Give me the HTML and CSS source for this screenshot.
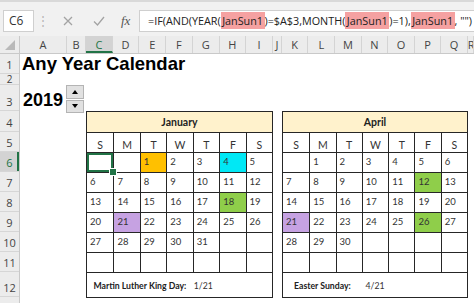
FILE: index.html
```html
<!DOCTYPE html>
<html>
<head>
<meta charset="utf-8">
<title>Any Year Calendar</title>
<link rel="stylesheet" href="styles.css">
</head>
<body>
<div class="app">
  <div class="fbar">
    <div class="namebox">C6</div>
    <div class="grip">⋮</div>
    <div class="fbtns">
      <svg class="ico-x" width="10" height="10" viewBox="0 0 10 10"><path d="M1 1L9 9M9 1L1 9" stroke="#a3a3a3" stroke-width="1.3" fill="none"/></svg>
      <svg class="ico-ok" width="12" height="10" viewBox="0 0 12 10"><path d="M1 5.5L4.5 9L11 1" stroke="#a3a3a3" stroke-width="1.3" fill="none"/></svg>
      <span class="fx">fx</span>
    </div>
    <div class="formula">=IF(AND(YEAR(<span class="ref">JanSun1</span>)=$A$3,MONTH(<span class="ref">JanSun1</span>)=1),<span class="ref">JanSun1</span>, "")</div>
  </div>

  <div class="colheads">
    <div class="corner"><svg width="10" height="10" viewBox="0 0 10 10"><path d="M10 0L10 10L0 10Z" fill="#b9b9b9"/></svg></div>
    <div class="ch">A</div>
    <div class="ch">B</div>
    <div class="ch active">C</div>
    <div class="ch">D</div>
    <div class="ch">E</div>
    <div class="ch">F</div>
    <div class="ch">G</div>
    <div class="ch">H</div>
    <div class="ch">I</div>
    <div class="ch">J</div>
    <div class="ch">K</div>
    <div class="ch">L</div>
    <div class="ch">M</div>
    <div class="ch">N</div>
    <div class="ch">O</div>
    <div class="ch">P</div>
    <div class="ch">Q</div>
    <div class="ch">R</div>
  </div>

  <div class="sheet">
    <div class="rowheads">
      <div class="rh h20">1</div>
      <div class="rh h11">2</div>
      <div class="rh h26">3</div>
      <div class="rh h21">4</div>
      <div class="rh h20">5</div>
      <div class="rh h20 active">6</div>
      <div class="rh h20">7</div>
      <div class="rh h20">8</div>
      <div class="rh h20">9</div>
      <div class="rh h20">10</div>
      <div class="rh h20">11</div>
      <div class="rh h25">12</div>
      <div class="rh h20"></div>
    </div>

    <div class="cells">
      <div class="title">Any Year Calendar</div>
      <div class="gap-row"></div>
      <div class="year-row">
        <span class="year">2019</span>
        <div class="spinner">
          <div class="spin-btn"><span class="tri-up"></span></div>
          <div class="spin-btn"><span class="tri-down"></span></div>
        </div>
      </div>

      <div class="cals">
        <div class="cal jan">
          <div class="cal-title">January</div>
          <div class="cal-row dow"><span>S</span><span>M</span><span>T</span><span>W</span><span>T</span><span>F</span><span>S</span></div>
          <div class="cal-row"><span class="sel"></span><span></span><span class="c-orange">1</span><span>2</span><span>3</span><span class="c-cyan">4</span><span>5</span></div>
          <div class="cal-row"><span>6</span><span>7</span><span>8</span><span>9</span><span>10</span><span>11</span><span>12</span></div>
          <div class="cal-row"><span>13</span><span>14</span><span>15</span><span>16</span><span>17</span><span class="c-green">18</span><span>19</span></div>
          <div class="cal-row"><span>20</span><span class="c-purple">21</span><span>22</span><span>23</span><span>24</span><span>25</span><span>26</span></div>
          <div class="cal-row"><span>27</span><span>28</span><span>29</span><span>30</span><span>31</span><span></span><span></span></div>
          <div class="cal-row"><span></span><span></span><span></span><span></span><span></span><span></span><span></span></div>
          <div class="cal-foot"><span class="lbl span4">Martin Luther King Day:</span><span class="val jan-val">1/21</span></div>
        </div>

        <div class="cal apr">
          <div class="cal-title">April</div>
          <div class="cal-row dow"><span>S</span><span>M</span><span>T</span><span>W</span><span>T</span><span>F</span><span>S</span></div>
          <div class="cal-row"><span></span><span>1</span><span>2</span><span>3</span><span>4</span><span>5</span><span>6</span></div>
          <div class="cal-row"><span>7</span><span>8</span><span>9</span><span>10</span><span>11</span><span class="c-green">12</span><span>13</span></div>
          <div class="cal-row"><span>14</span><span>15</span><span>16</span><span>17</span><span>18</span><span>19</span><span>20</span></div>
          <div class="cal-row"><span class="c-purple">21</span><span>22</span><span>23</span><span>24</span><span>25</span><span class="c-green">26</span><span>27</span></div>
          <div class="cal-row"><span>28</span><span>29</span><span>30</span><span></span><span></span><span></span><span></span></div>
          <div class="cal-row"><span></span><span></span><span></span><span></span><span></span><span></span><span></span></div>
          <div class="cal-foot"><span class="lbl span3">Easter Sunday:</span><span class="val">4/21</span></div>
        </div>
      </div>
    </div>
  </div>
</div>
</body>
</html>
```

FILE: styles.css
```css
* { box-sizing: border-box; margin: 0; padding: 0; }

html, body {
  width: 474px;
  height: 303px;
  overflow: hidden;
  background: #ffffff;
}

body {
  font-family: "Open Sans", "Noto Sans", sans-serif;
  color: #222;
}

.app {
  display: flex;
  flex-direction: column;
  width: 474px;
  height: 303px;
}

/* ---------- formula bar ---------- */
.fbar {
  height: 36px;
  flex: none;
  display: flex;
  align-items: flex-start;
  background: #f1f1f1;
  border-top: 2px solid #d9d9d9;
  padding: 8px 0 0 3px;
}

.namebox {
  width: 31px;
  height: 22px;
  background: #fff;
  border: 1px solid #cfcfcf;
  font-size: 12px;
  line-height: 20px;
  padding-left: 5px;
  color: #333;
}

.grip {
  width: 18px;
  height: 22px;
  text-align: center;
  font-size: 12px;
  line-height: 22px;
  color: #b5b5b5;
}

.fbtns {
  width: 87px;
  height: 22px;
  display: flex;
  align-items: center;
  padding-left: 11px;
}

.ico-x { margin-right: 20px; }
.ico-ok { margin-right: 16px; }

.fx {
  font-family: "Liberation Serif", serif;
  font-style: italic;
  font-size: 13px;
  color: #555;
}

.formula {
  flex: 1;
  height: 22px;
  background: #fff;
  border: 1px solid #cfcfcf;
  border-right: none;
  padding-left: 8px;
  font-size: 10.8px;
  line-height: 20px;
  white-space: nowrap;
  overflow: hidden;
  color: #222;
}

.ref {
  background: #f5a1a1;
  padding: 1px 1.5px;
}

/* ---------- column headers ---------- */
.colheads {
  height: 18px;
  flex: none;
  display: grid;
  grid-template-columns: 20px 47px 19px repeat(7, 26.714px) 9px repeat(7, 26.571px) 1fr;
  background: #ececec;
  border-bottom: 1px solid #c9c9c9;
}

.corner {
  display: flex;
  align-items: flex-end;
  justify-content: flex-end;
  padding: 0 4px 3px 0;
  border-right: 1px solid #c9c9c9;
}

.ch {
  font-size: 11px;
  line-height: 17px;
  text-align: center;
  color: #444;
  border-right: 1px solid #d4d4d4;
  overflow: hidden;
}

.ch.active {
  background: #d3d3d3;
  color: #217346;
  border-bottom: 2px solid #217346;
}

/* ---------- sheet ---------- */
.sheet {
  flex: 1;
  display: flex;
  min-height: 0;
}

.rowheads {
  width: 20px;
  flex: none;
  background: #ececec;
  border-right: 1px solid #c9c9c9;
  display: flex;
  flex-direction: column;
}

.rh {
  flex: none;
  font-size: 11px;
  line-height: 14px;
  color: #444;
  text-align: center;
  display: flex;
  align-items: flex-end;
  justify-content: center;
  padding-bottom: 1px;
  border-bottom: 1px solid #d6d6d6;
}

.rh.active {
  background: #d3d3d3;
  color: #217346;
  box-shadow: inset -2px 0 0 #217346;
}

.h11 { height: 11px; line-height: 10px; font-size: 10px; padding-bottom: 0; }
.h20 { height: 20px; }
.h21 { height: 21px; }
.h25 { height: 25px; }
.h26 { height: 26px; }

.cells {
  flex: 1;
  display: flex;
  flex-direction: column;
}

.title {
  height: 20px;
  font-family: "Liberation Sans", Arial, sans-serif;
  font-weight: bold;
  font-size: 18.5px;
  line-height: 20px;
  padding-left: 2px;
  color: #000;
  white-space: nowrap;
}

.gap-row { height: 11px; }

.year-row {
  height: 26px;
  display: flex;
  align-items: flex-start;
}

.year {
  width: 46px;
  padding: 5px 0 0 3px;
  font-family: "Liberation Sans", Arial, sans-serif;
  font-weight: bold;
  font-size: 18px;
  line-height: 20px;
  color: #000;
}

.spinner {
  width: 18px;
  display: flex;
  flex-direction: column;
  gap: 1px;
}

.spin-btn {
  height: 13.5px;
  background: #e1e1e1;
  border: 1px solid #b4b4b4;
  display: flex;
  align-items: center;
  justify-content: center;
}

.tri-up {
  width: 0;
  height: 0;
  border-left: 3.5px solid transparent;
  border-right: 3.5px solid transparent;
  border-bottom: 4px solid #000;
}

.tri-down {
  width: 0;
  height: 0;
  border-left: 3.5px solid transparent;
  border-right: 3.5px solid transparent;
  border-top: 4px solid #000;
}

/* ---------- calendars ---------- */
.cals {
  display: flex;
  gap: 9px;
  padding-left: 66px;
}

.cal {
  border: 1px solid #262626;
  font-family: Lato, "Open Sans", sans-serif;
  color: #333;
}

.cal.jan { width: 187px; }
.cal.apr { width: 186px; }

.cal-title {
  height: 20px;
  background: #fff2cc;
  font-weight: bold;
  font-size: 10.5px;
  line-height: 20px;
  text-align: center;
  color: #222;
}

.cal-row {
  height: 20px;
  display: grid;
  grid-template-columns: repeat(7, 1fr);
  border-top: 1px solid #262626;
}

.cal-row > span {
  font-size: 9.5px;
  line-height: 12px;
  padding: 3px 0 0 3px;
  border-left: 1px solid #262626;
}

.cal-row > span:first-child { border-left: none; }

.cal-row.dow > span {
  text-align: center;
  padding: 6px 0 0 0;
  font-size: 10.5px;
}

.c-orange { background: #ffc000; }
.c-cyan { background: #00e8f5; }
.c-green { background: #8fce4a; }
.c-purple { background: #c6a2e2; }

.sel {
  position: relative;
  box-shadow: inset 0 0 0 2px #217346;
}

.sel::after {
  content: "";
  position: absolute;
  right: -4px;
  bottom: -4px;
  width: 6px;
  height: 6px;
  background: #217346;
  border: 1px solid #fff;
  z-index: 2;
}

.cal-foot {
  height: 25px;
  display: grid;
  grid-template-columns: repeat(7, 1fr);
  align-items: center;
  border-top: 1px solid #262626;
  font-size: 8.7px;
}

.lbl {
  font-weight: bold;
  text-align: center;
  white-space: nowrap;
  color: #222;
}

.span4 { grid-column: 1 / 5; }
.span3 { grid-column: 1 / 4; }

.val {
  text-align: center;
  color: #333;
}

.jan-val {
  text-align: left;
  padding-left: 1px;
}
```
